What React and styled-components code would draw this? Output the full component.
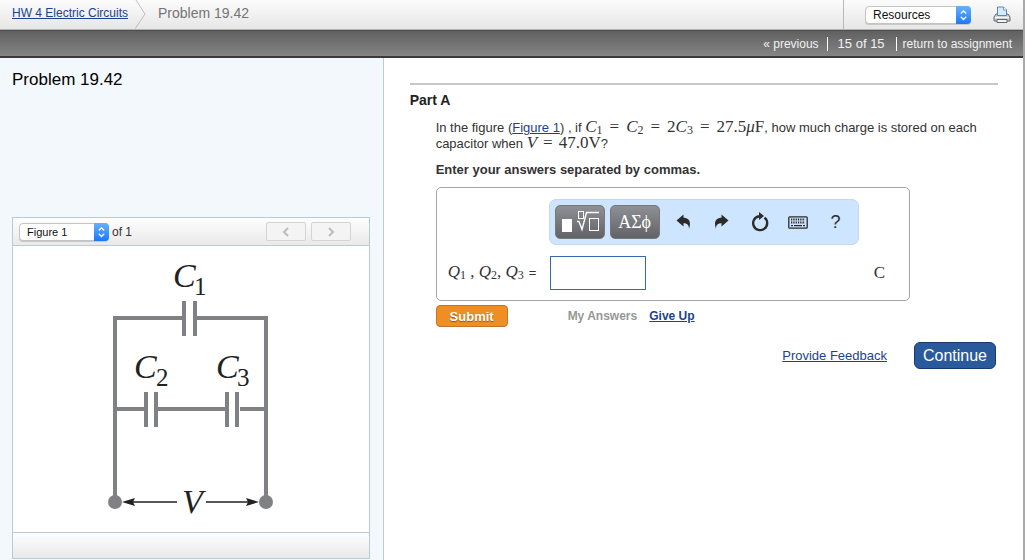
import React from "react";
import styled, { createGlobalStyle } from "styled-components";

const Global = createGlobalStyle`
  * { box-sizing: border-box; }
  body { margin: 0; background: #fff; color: #333; font: 13px/16px "Liberation Sans", Arial, sans-serif; }
  button, input, select { font-family: inherit; margin: 0; }
`;

const serif = `"Liberation Serif", "Times New Roman", serif`;

const Page = styled.div`
  min-height: 100vh;
  display: flex;
  flex-direction: column;
  border-right: 2px solid #a9a9ab;
`;

const Header = styled.header`
  display: flex;
  height: 30px;
  background: linear-gradient(#fcfcfc, #e6e6e6);
  border-bottom: 1px solid #b5b5b5;
`;

const Crumbs = styled.nav`
  display: flex;
  flex: 1;
  line-height: 26px;
  padding-left: 12px;
  font-size: 14px;
  color: #747474;
  svg { margin: 0 12px 0 7px; }
`;

const Link = styled.a`
  color: #1a4390;
  font-size: ${(p) => p.$size || 13}px;
  font-weight: ${(p) => (p.$bold ? 700 : 400)};
  text-decoration: underline;
`;

const HeaderTools = styled.div`
  display: flex;
  align-items: center;
  gap: 22px;
  padding: 0 12px 0 21px;
  border-left: 1px solid #b9b9b9;
`;

const SelectWrap = styled.span`
  position: relative;
  display: inline-flex;
  width: ${(p) => p.$width}px;
`;

const Select = styled.select`
  appearance: none;
  width: 100%;
  height: 18px;
  padding: 0 20px 0 7px;
  border: 1px solid #c4c4c4;
  border-radius: 4px;
  background: #fff;
  color: #111;
  font-size: ${(p) => p.$size}px;
  box-shadow: 0 1px 0 #c8c8c8;
`;

const Stepper = styled.svg`
  position: absolute;
  top: 0;
  right: 0;
  pointer-events: none;
  border-radius: 0 4px 4px 0;
  background: linear-gradient(#68b1f9, #1a78fb);
`;

const IconButton = styled.button`
  display: flex;
  align-items: center;
  justify-content: center;
  padding: 0;
  border: 0;
  background: none;
  color: #2b2b2b;
  font-size: 18px;
  width: ${(p) => p.$width || 18}px;
`;

const NavBar = styled.nav`
  display: flex;
  align-items: center;
  justify-content: flex-end;
  height: 28px;
  padding-right: 11px;
  background: linear-gradient(#606060, #858585);
  border-top: 1px solid #4e4e4e;
  border-bottom: 2px solid #3a3a3a;
`;

const NavItem = styled.span`
  padding: 0 ${(p) => p.$right || 0}px 0 ${(p) => p.$left || 0}px;
  border-left: ${(p) => (p.$left ? "1px solid #fff" : "0")};
  color: #f2f2f2;
  font-size: ${(p) => p.$size || 12}px;
  line-height: 14px;
  a { color: inherit; text-decoration: none; }
`;

const Main = styled.main`
  flex: 1;
  display: grid;
  grid-template-columns: minmax(0, 3fr) minmax(0, 5fr);
`;

const Side = styled.aside`
  display: flex;
  flex-direction: column;
  justify-content: space-between;
  gap: 20px;
  padding: 12px 13px 1px 12px;
  background: #f3f8fd;
  border-right: 1px solid #b9cad9;
`;

const Title = styled.h1`
  margin: 0;
  color: #000;
  font-size: 17px;
  font-weight: 400;
  line-height: 20px;
`;

const FigurePanel = styled.section`
  border: 1px solid #b9cad9;
  background: #fff;
`;

const FigureBar = styled.div`
  display: flex;
  align-items: center;
  gap: 5px;
  height: 28px;
  padding: 0 18px 0 6px;
  background: linear-gradient(#fefefe, #e9e9e9);
  border-bottom: 1px solid #b9cad9;
  font-size: 12px;
`;

const Count = styled.span`
  flex: 1;
  margin-left: -2px;
`;

const Pager = styled.button`
  display: flex;
  align-items: center;
  justify-content: center;
  width: 40px;
  height: 19px;
  padding: 0;
  background: #f4f4f4;
  border: 1px solid #d4d4d4;
  border-radius: 2px;
`;

const Figure = styled.div`
  display: flex;
  justify-content: center;
  height: 286px;
  svg { font-family: ${serif}; }
`;

const FigureFoot = styled.div`
  height: 26px;
  border-top: 1px solid #b9cad9;
  background: linear-gradient(#fefefe, #e9e9e9);
`;

const Content = styled.section`
  padding: 25px 25px 25px 26px;
`;

const PartTitle = styled.h2`
  margin: 0;
  padding-top: 7px;
  border-top: 2px solid #c8c8c8;
  color: #222;
  font-size: 14px;
  line-height: 16px;
`;

const PartBody = styled.div`
  padding-left: 26px;
`;

const Para = styled.p`
  margin: ${(p) => p.$top}px 0 0;
  font-weight: ${(p) => (p.$bold ? 700 : 400)};
`;

const MathText = styled.span`
  font-family: ${serif};
  font-size: 17px;
  line-height: 0;
  white-space: nowrap;
  sub { font-size: 12px; line-height: 0; vertical-align: -2px; }
`;

const Eq = styled.span`
  margin: 0 ${(p) => p.$gap || 7}px;
`;

const AnswerBox = styled.form`
  display: grid;
  grid-template-columns: 101px 310px 1fr;
  row-gap: 11px;
  align-items: center;
  max-width: 474px;
  margin-top: 9px;
  padding: 11px 11px 10px;
  border: 1px solid #a5a5a5;
  border-radius: 5px;
`;

const Toolbar = styled.div`
  grid-column: 2 / 3;
  display: flex;
  align-items: center;
  height: 46px;
  padding-left: 5px;
  background: #cee5ff;
  border: 1px solid #c6d8ec;
  border-radius: 7px;
`;

const MathButton = styled.button`
  display: flex;
  align-items: center;
  justify-content: center;
  width: 50px;
  height: 34px;
  margin-right: 5px;
  padding: 0;
  border: 1px solid #77787c;
  border-radius: 5px;
  background: linear-gradient(#8f9095, #626366);
  color: #fff;
  font: 18px/20px ${serif};
`;

const AnswerLabel = styled.label`
  grid-column: 1 / 2;
  display: flex;
  align-items: baseline;
  gap: 5px;
  font-size: 13px;
  white-space: nowrap;
`;

const AnswerInput = styled.input`
  width: 96px;
  height: 34px;
  margin-left: 1px;
  border: 1px solid #3968ac;
  background: #fff;
`;

const Unit = styled.span`
  padding-left: 15px;
  font: 17px/20px ${serif};
`;

const Actions = styled.div`
  display: flex;
  align-items: center;
  gap: 12px;
  margin-top: 4px;
  font-size: 12px;
`;

const Submit = styled.button`
  width: 72px;
  height: 22px;
  margin-right: 48px;
  padding: 0;
  border: 1px solid #c2762a;
  border-radius: 4px;
  background: #ef8e22;
  color: #fff;
  font-size: 13px;
  font-weight: 700;
  text-shadow: 0 1px 1px #8f5510;
`;

const Muted = styled.span`
  color: #979797;
  font-weight: 700;
`;

const Footer = styled.div`
  display: flex;
  align-items: center;
  justify-content: flex-end;
  gap: 27px;
  margin-top: 15px;
  padding-right: 2px;
`;

const Continue = styled.button`
  width: 82px;
  height: 27px;
  padding: 0;
  border: 1px solid #173b6d;
  border-radius: 6px;
  background: #2a5a9c;
  color: #fff;
  font-size: 16px;
  line-height: 24px;
`;

function Picker({ label, width, size, children }) {
  return (
    <SelectWrap $width={width}>
      <Select aria-label={label} $size={size}>
        <option>{children}</option>
      </Select>
      <Stepper width="15" height="18" viewBox="0 0 15 18" fill="none" stroke="#fff" strokeWidth="1.3">
        <path d="M4.8 7.5 7.5 4.8l2.7 2.7M4.8 10.8l2.7 2.7 2.7-2.7" />
      </Stepper>
    </SelectWrap>
  );
}

function Circuit() {
  return (
    <svg width="200" height="286" viewBox="91 246 200 286" role="img" aria-label="Circuit with capacitors C1, C2 and C3">
      <g stroke="#808184" strokeWidth="4" fill="none">
        <path d="M183 318H115V501M197 318H266V501M115 409H144M158 409H226M240 409H266" />
        <path d="M184 301V336M195 301V336M146 392V427M156 392V427M227 392V427M237 392V427" />
      </g>
      <g fill="#808184">
        <circle cx="115" cy="502" r="7" />
        <circle cx="266" cy="502" r="7" />
      </g>
      <path d="M130 502H177M206 502H250" stroke="#222" strokeWidth="1.3" />
      <path d="M122 502 135 498 133 502 135 506ZM259 502 246 498 248 502 246 506Z" fill="#222" />
      <g fill="#222" fontSize="34" fontStyle="italic">
        <text x="173" y="287">C</text>
        <text x="134" y="378">C</text>
        <text x="216" y="378">C</text>
        <text x="182" y="513">V</text>
      </g>
      <g fill="#222" fontSize="25">
        <text x="194" y="295">1</text>
        <text x="156" y="386">2</text>
        <text x="237" y="386">3</text>
      </g>
    </svg>
  );
}

const Var = ({ name, sub }) => (
  <>
    <i>{name}</i>
    {sub && <sub>{sub}</sub>}
  </>
);

const replyArrow = "M0.500 6.500 7.500 0.500V3.800c5.500 0 8 4 5.500 11 0-4-2-5.600-5.500-5.600v3.300Z";

export default function App() {
  return (
    <Page>
      <Global />
      <Header>
        <Crumbs>
          <Link href="#hw4" $size={12}>HW 4 Electric Circuits</Link>
          <svg width="11" height="29" viewBox="0 0 11 29" fill="none">
            <path d="M1 0 10 14 0 29" stroke="#bdbdbd" />
          </svg>
          <span>Problem 19.42</span>
        </Crumbs>
        <HeaderTools>
          <Picker label="Resources" width={106} size={12}>Resources</Picker>
          <IconButton aria-label="Print">
            <svg width="18" height="18" viewBox="0 0 18 18">
              <path d="M3 8h12l2 3v4H1v-4Z" fill="#c9cacf" stroke="#6a6b70" />
              <path d="M4.500 9.500V1h6L13.500 4v5.500Z" fill="#d8eafa" stroke="#5588b8" />
              <path d="M10.500 1V4h3" fill="#fff" stroke="#5588b8" strokeWidth=".8" />
              <path d="M2 11.500h14" stroke="#f8f8f8" strokeWidth="1.500" />
              <path d="M4 13.500h10v3H4Z" fill="#f4f4f4" stroke="#66676c" />
            </svg>
          </IconButton>
        </HeaderTools>
      </Header>
      <NavBar>
        <NavItem $right={8}><a href="#previous">« previous</a></NavItem>
        <NavItem $left={10} $right={11} $size={13}>15 of 15</NavItem>
        <NavItem $left={6}><a href="#assignment">return to assignment</a></NavItem>
      </NavBar>
      <Main>
        <Side>
          <Title>Problem 19.42</Title>
          <FigurePanel>
            <FigureBar>
              <Picker label="Figure" width={90} size={11}>Figure 1</Picker>
              <Count>of 1</Count>
              <Pager aria-label="Previous figure">
                <svg width="8" height="10" viewBox="0 0 8 10" fill="none" stroke="#bcbcbc" strokeWidth="2"><path d="M6 1 2 5l4 4" /></svg>
              </Pager>
              <Pager aria-label="Next figure">
                <svg width="8" height="10" viewBox="0 0 8 10" fill="none" stroke="#bcbcbc" strokeWidth="2"><path d="M2 1l4 4-4 4" /></svg>
              </Pager>
            </FigureBar>
            <Figure><Circuit /></Figure>
            <FigureFoot />
          </FigurePanel>
        </Side>
        <Content>
          <PartTitle>Part A</PartTitle>
          <PartBody>
            <Para $top={12}>
              In the figure (<Link href="#figure1">Figure 1</Link>) , if{" "}
              <MathText>
                <Var name="C" sub="1" /><Eq>=</Eq><Var name="C" sub="2" /><Eq>=</Eq>2<Var name="C" sub="3" /><Eq>=</Eq>27.5<i>μ</i>F
              </MathText>
              <span>, how much charge is stored on each</span>{" "}
              <span>capacitor when</span>{" "}
              <MathText><Var name="V" /><Eq $gap={6}>=</Eq>47.0V</MathText>?
            </Para>
            <Para $top={10} $bold>Enter your answers separated by commas.</Para>
            <AnswerBox onSubmit={(e) => e.preventDefault()} id="answer">
              <Toolbar>
                <MathButton type="button" aria-label="Templates">
                  <svg width="40" height="24" viewBox="0 0 40 24" fill="none" stroke="#fff">
                    <rect x="2" y="9" width="10" height="13" fill="#fff" stroke="none" />
                    <path d="M17 11.500h2l3 8 4.500-17H39" strokeWidth="1.4" />
                    <rect x="18.500" y="1.500" width="5" height="7" />
                    <rect x="29.500" y="8.500" width="9" height="12" />
                  </svg>
                </MathButton>
                <MathButton type="button">ΑΣϕ</MathButton>
                <IconButton type="button" aria-label="Undo" $width={38}>
                  <svg width="15" height="16" viewBox="0 0 15 16" fill="currentColor"><path d={replyArrow} /></svg>
                </IconButton>
                <IconButton type="button" aria-label="Redo" $width={38}>
                  <svg width="15" height="16" viewBox="0 0 15 16" fill="currentColor"><path transform="matrix(-1 0 0 1 15 0)" d={replyArrow} /></svg>
                </IconButton>
                <IconButton type="button" aria-label="Reset" $width={38}>
                  <svg width="18" height="20" viewBox="0 0 18 20" fill="none">
                    <path d="M13.500 5.600A7 7 0 1 1 8 4.200" stroke="currentColor" strokeWidth="2.400" />
                    <path d="M8 0 13 4 8 8Z" fill="currentColor" />
                  </svg>
                </IconButton>
                <IconButton type="button" aria-label="Keyboard" $width={38}>
                  <svg width="20" height="14" viewBox="0 0 20 14" fill="none" stroke="currentColor">
                    <rect x=".8" y="1.800" width="18.400" height="11.400" rx="1" strokeWidth="1.300" />
                    <path d="M3 4.500h14M3 7.500h14" strokeWidth="2" strokeDasharray="1.300 1" />
                    <path d="M3 10.700h2M6 10.700h8M15 10.700h2" strokeWidth="1.300" />
                  </svg>
                </IconButton>
                <IconButton type="button" aria-label="Help" $width={38}>?</IconButton>
              </Toolbar>
              <AnswerLabel htmlFor="charges">
                <MathText><Var name="Q" sub="1" /> , <Var name="Q" sub="2" />, <Var name="Q" sub="3" /></MathText>
                =
              </AnswerLabel>
              <AnswerInput id="charges" type="text" />
              <Unit>C</Unit>
            </AnswerBox>
            <Actions>
              <Submit type="submit" form="answer">Submit</Submit>
              <Muted>My Answers</Muted>
              <Link href="#giveup" $size={12} $bold>Give Up</Link>
            </Actions>
          </PartBody>
          <Footer>
            <Link href="#feedback">Provide Feedback</Link>
            <Continue type="button">Continue</Continue>
          </Footer>
        </Content>
      </Main>
    </Page>
  );
}
